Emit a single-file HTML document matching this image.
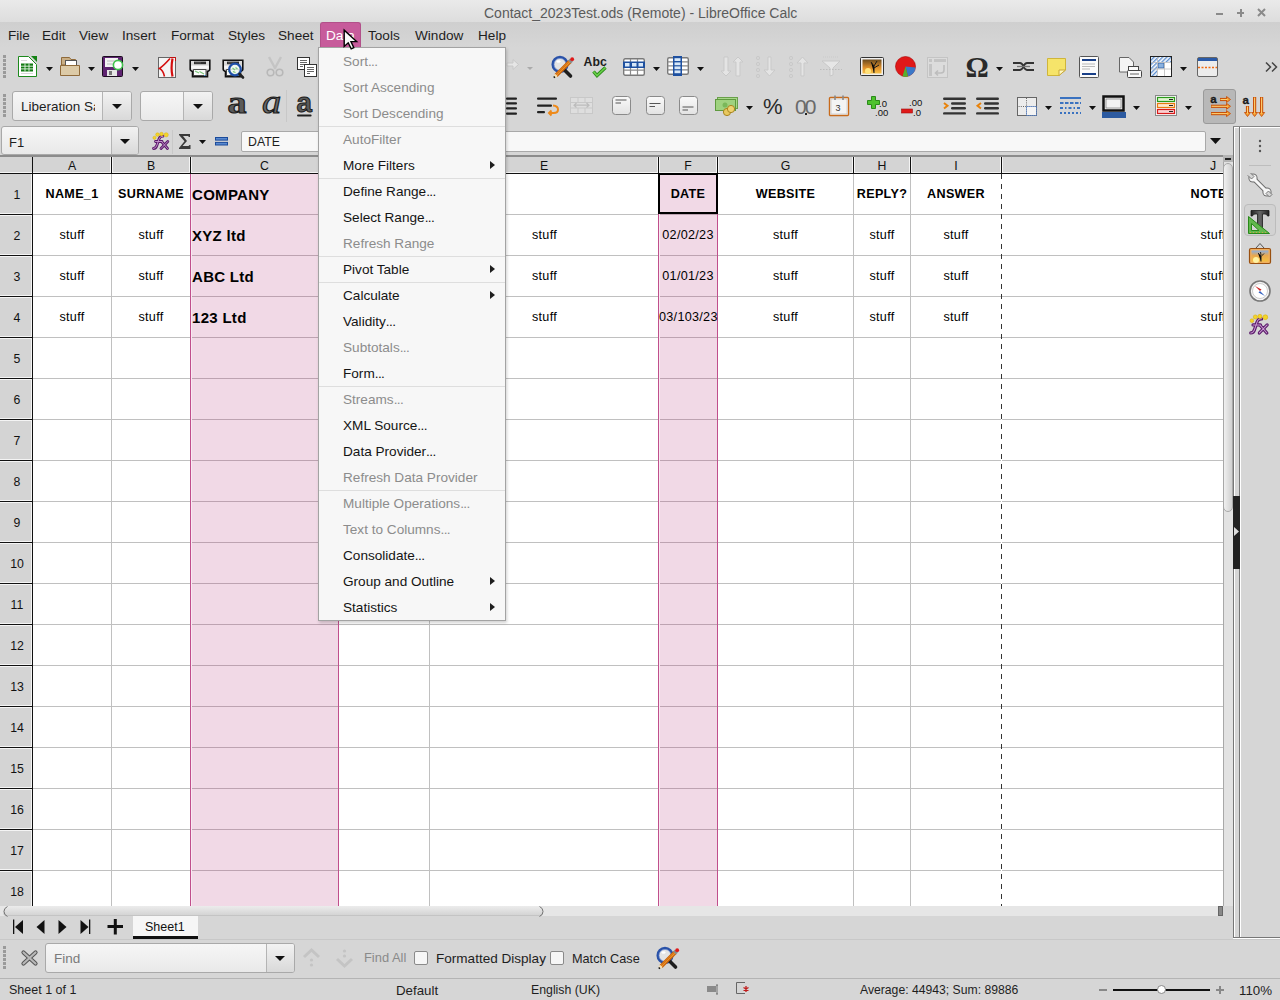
<!DOCTYPE html><html><head><meta charset="utf-8"><style>
*{margin:0;padding:0;box-sizing:border-box}
html,body{width:1280px;height:1000px;overflow:hidden;background:#d6d6d6;font-family:"Liberation Sans",sans-serif;position:relative}
.ab{position:absolute;overflow:visible}
.t{position:absolute;white-space:nowrap;line-height:1}
.it{position:absolute;left:343px;font-size:13.6px;color:#141414;white-space:nowrap;line-height:1}
.dis{color:#8c8c8c}
.sep{position:absolute;left:319px;width:186px;height:1px;background:#dedede}
.arr{position:absolute;left:490px;width:0;height:0;border-top:4.75px solid transparent;border-bottom:4.75px solid transparent;border-left:5.5px solid #1e1e1e}
.cell{position:absolute;white-space:nowrap;line-height:1;font-size:12.6px;letter-spacing:0.3px;color:#000}
.box{position:absolute;border:1px solid #a9a9a9;border-radius:3px;background:linear-gradient(#f6f6f6,#e9e9e9)}
.btn{position:absolute;border-left:1px solid #b4b4b4;background:linear-gradient(#f2f2f2,#d9d9d9)}
</style></head><body>
<div class="ab" style="left:0;top:0;width:1280px;height:22px;background:linear-gradient(#eaeaea,#dddddd)"></div>
<div class="t" style="left:484px;top:6px;font-size:14px;color:#5b5b5b">Contact_2023Test.ods (Remote) - LibreOffice Calc</div>
<div class="ab" style="left:1216px;top:13px;width:7px;height:2px;background:#8a8a8a"></div>
<div class="ab" style="left:1237px;top:12px;width:7px;height:2px;background:#8a8a8a"></div><div class="ab" style="left:1239.5px;top:9px;width:2px;height:8px;background:#8a8a8a"></div>
<svg class="ab" style="left:1257px;top:8px" width="9" height="9"><path d="M1 1L8 8M8 1L1 8" stroke="#8a8a8a" stroke-width="2"/></svg>
<div class="ab" style="left:0;top:22px;width:1280px;height:26px;background:linear-gradient(#cfcfcf,#d6d6d6)"></div>
<div class="ab" style="left:320px;top:22px;width:41px;height:26px;background:#c75b9b;border:1px solid #b2508a;border-bottom:none;border-radius:3px 3px 0 0"></div>
<div class="t" style="left:8px;top:29px;font-size:13.6px;color:#1e1e1e">File</div>
<div class="t" style="left:42px;top:29px;font-size:13.6px;color:#1e1e1e">Edit</div>
<div class="t" style="left:79px;top:29px;font-size:13.6px;color:#1e1e1e">View</div>
<div class="t" style="left:122px;top:29px;font-size:13.6px;color:#1e1e1e">Insert</div>
<div class="t" style="left:171px;top:29px;font-size:13.6px;color:#1e1e1e">Format</div>
<div class="t" style="left:228px;top:29px;font-size:13.6px;color:#1e1e1e">Styles</div>
<div class="t" style="left:278px;top:29px;font-size:13.6px;color:#1e1e1e">Sheet</div>
<div class="t" style="left:326px;top:29px;font-size:13.6px;color:#fff">Data</div>
<div class="t" style="left:368px;top:29px;font-size:13.6px;color:#1e1e1e">Tools</div>
<div class="t" style="left:415px;top:29px;font-size:13.6px;color:#1e1e1e">Window</div>
<div class="t" style="left:478px;top:29px;font-size:13.6px;color:#1e1e1e">Help</div>
<svg class="ab" style="left:3px;top:55px" width="3" height="24" viewBox="0 0 3 24"><rect x="0" y="0" width="3" height="3" fill="#9a9a9a"/><rect x="0" y="4" width="3" height="3" fill="#9a9a9a"/><rect x="0" y="8" width="3" height="3" fill="#9a9a9a"/><rect x="0" y="12" width="3" height="3" fill="#9a9a9a"/><rect x="0" y="16" width="3" height="3" fill="#9a9a9a"/><rect x="0" y="20" width="3" height="3" fill="#9a9a9a"/></svg>
<svg class="ab" style="left:18px;top:56px" width="19" height="21" viewBox="0 0 19 21"><path d="M0.5 0.5H10.5L18.5 8.5V20.5H0.5Z" fill="#fff" stroke="#1d8a1d"/><path d="M13 0H19V6Z" fill="#138313"/><rect x="3" y="7.5" width="12" height="8" fill="#127a12"/><path d="M3 10.2H15M3 12.9H15M7 7.5V15.5M11 7.5V15.5" stroke="#e8f5e8" stroke-width="0.9"/><path d="M3 4.5H9M3 17.5H15" stroke="#d8d8d8" stroke-width="1"/></svg>
<svg class="ab" style="left:46px;top:67px" width="7" height="4" viewBox="0 0 7 4"><path d="M0 0H7L3.5 4Z" fill="#111"/></svg>
<svg class="ab" style="left:60px;top:57px" width="20" height="19" viewBox="0 0 20 19"><path d="M1.5 0.5H9.5L11 2.5H15.5V8H1.5Z" fill="#c9ae84" stroke="#8f6a3a"/><rect x="5.5" y="3.5" width="11" height="7" fill="#fff" stroke="#555"/><path d="M0.5 8.5H19.5V18.5H0.5Z" fill="#dccaa7" stroke="#8f6a3a"/></svg>
<svg class="ab" style="left:88px;top:67px" width="7" height="4" viewBox="0 0 7 4"><path d="M0 0H7L3.5 4Z" fill="#111"/></svg>
<svg class="ab" style="left:102px;top:56px" width="21" height="21" viewBox="0 0 21 21"><rect x="0.5" y="0.5" width="20" height="20" rx="1" fill="#5e2370" stroke="#1a0d1e"/><rect x="3" y="2" width="13" height="9" fill="#f3f3f3"/><path d="M5 5H14M5 8H14" stroke="#bbb"/><rect x="5" y="14" width="10" height="6" fill="#e6e6e6"/><rect x="7" y="15" width="3" height="4" fill="#777"/><circle cx="16" cy="9" r="4.6" fill="#fff" stroke="#3ec24a" stroke-width="1.6"/></svg>
<svg class="ab" style="left:132px;top:67px" width="7" height="4" viewBox="0 0 7 4"><path d="M0 0H7L3.5 4Z" fill="#111"/></svg>
<svg class="ab" style="left:158px;top:57px" width="18" height="21" viewBox="0 0 18 21"><rect x="0.5" y="0.5" width="17" height="20" fill="#f4f4f4" stroke="#666"/><path d="M12 1.5C8 6 5 9 1.5 11.5C4 12.5 5.5 15 6.5 19.5" fill="none" stroke="#d40f0f" stroke-width="1.6"/><path d="M14.5 1.5C13.5 7 13 13 14.5 19.5" fill="none" stroke="#d40f0f" stroke-width="2.2"/><path d="M12 0.5H17.5V4" fill="none" stroke="#c01010" stroke-width="1"/></svg>
<svg class="ab" style="left:189px;top:59px" width="22" height="20" viewBox="0 0 22 20"><defs><linearGradient id="pg" x1="0" y1="0" x2="0" y2="1"><stop offset="0" stop-color="#e0e0e0"/><stop offset="1" stop-color="#bdbdbd"/></linearGradient></defs><path d="M1.2 1.2H20.8V10.5Q20.8 11.5 19.5 12L18.5 12.5V17.8H3.5V12.5L2.5 12Q1.2 11.5 1.2 10.5Z" fill="url(#pg)" stroke="#111" stroke-width="1.6"/><rect x="5" y="2.6" width="12" height="2.6" fill="#2e2e2e"/><path d="M6.5 3.9H12" stroke="#888" stroke-width="0.9" stroke-dasharray="1 1"/><rect x="2.2" y="6.6" width="17.6" height="3.2" fill="#f8f8f8"/><rect x="4.6" y="10.6" width="12.4" height="6" fill="#fbfbfb" stroke="#222" stroke-width="0.8"/><path d="M6 12L10 14M10.5 12.5L15 15" stroke="#7cc87c" stroke-width="1.2"/><rect x="15" y="16" width="1.5" height="1" fill="#4aa0e0"/></svg>
<svg class="ab" style="left:222px;top:59px" width="22" height="20" viewBox="0 0 22 20"><defs><linearGradient id="pg" x1="0" y1="0" x2="0" y2="1"><stop offset="0" stop-color="#e0e0e0"/><stop offset="1" stop-color="#bdbdbd"/></linearGradient></defs><path d="M1.2 1.2H20.8V10.5Q20.8 11.5 19.5 12L18.5 12.5V17.8H3.5V12.5L2.5 12Q1.2 11.5 1.2 10.5Z" fill="url(#pg)" stroke="#111" stroke-width="1.6"/><rect x="5" y="2.6" width="12" height="2.6" fill="#2e2e2e"/><path d="M6.5 3.9H12" stroke="#888" stroke-width="0.9" stroke-dasharray="1 1"/><rect x="2.2" y="6.6" width="17.6" height="3.2" fill="#f8f8f8"/><rect x="4.6" y="10.6" width="12.4" height="6" fill="#fbfbfb" stroke="#222" stroke-width="0.8"/><path d="M6 12L10 14M10.5 12.5L15 15" stroke="#7cc87c" stroke-width="1.2"/><rect x="15" y="16" width="1.5" height="1" fill="#4aa0e0"/><circle cx="13" cy="10.5" r="5.8" fill="rgba(240,248,240,0.85)" stroke="#1e4fa8" stroke-width="2.2"/><path d="M10.5 9L13 11M13.5 8.5L15.5 10M11 12.5L13.5 13.5" stroke="#7cc87c" stroke-width="1.3"/><path d="M17.5 15L21 18.5" stroke="#222" stroke-width="2.6" stroke-linecap="round"/></svg>
<svg class="ab" style="left:266px;top:56px" width="18" height="21" viewBox="0 0 18 21"><path d="M3 1L9.5 13M15 1L8.5 13" stroke="#c4c4c4" stroke-width="2.4"/><circle cx="4.5" cy="16.5" r="3.3" fill="none" stroke="#b8b8b8" stroke-width="1.6"/><circle cx="13.5" cy="16.5" r="3.3" fill="none" stroke="#b8b8b8" stroke-width="1.6"/></svg>
<svg class="ab" style="left:297px;top:57px" width="20" height="20" viewBox="0 0 20 20"><rect x="0.5" y="0.5" width="12" height="12" fill="#fff" stroke="#333"/><path d="M3 3.5H10M3 5.5H10M3 7.5H10M3 9.5H6" stroke="#555" stroke-width="0.9"/><rect x="7.5" y="7.5" width="12" height="12" fill="#fff" stroke="#333"/><path d="M10 10.5H17M10 12.5H17M10 14.5H17M10 16.5H13" stroke="#555" stroke-width="0.9"/></svg>
<svg class="ab" style="left:506px;top:58px" width="14" height="13" viewBox="0 0 14 13"><path d="M1 5H7V1.5L12.5 6.5L7 11.5V8H1Z" fill="#e6e6e6" stroke="#c8c8c8"/></svg>
<svg class="ab" style="left:527px;top:67px" width="6" height="3" viewBox="0 0 6 3"><path d="M0 0H6L3.0 3Z" fill="#aaa"/></svg>
<svg class="ab" style="left:551px;top:55px" width="24" height="24" viewBox="0 0 24 24"><circle cx="9" cy="9.4" r="7.3" fill="#e4e4e4" stroke="#2a52a8" stroke-width="2.5"/><circle cx="9" cy="9.4" r="6" fill="none" stroke="#6a8ad0" stroke-width="0.7"/><ellipse cx="7.5" cy="6.5" rx="2" ry="1.3" fill="#fff"/><path d="M14 15.5L19.5 21" stroke="#1e1e1e" stroke-width="3.6" stroke-linecap="round"/><path d="M5 20.5L19 6.5" stroke="#c8600a" stroke-width="4"/><path d="M5 20.5L19 6.5" stroke="#f4a030" stroke-width="2.2" stroke-dasharray="0.8 0.6"/><path d="M18.5 7L20.5 5" stroke="#8a8a8a" stroke-width="4"/><circle cx="21.2" cy="4.2" r="1.9" fill="#e01818"/><path d="M5.5 20L3.5 22" stroke="#f8e0b0" stroke-width="3"/><path d="M3.8 21.7L2.8 22.7" stroke="#111" stroke-width="1.8"/></svg>
<svg class="ab" style="left:584px;top:56px" width="23" height="22" viewBox="0 0 23 22"><text x="-0.5" y="10" font-family="Liberation Sans" font-weight="bold" font-size="12.3" fill="#1e1e1e">Abc</text><path d="M9.5 15.5L13 19.5L21.5 11.5" fill="none" stroke="#2a8a1a" stroke-width="3.4"/><path d="M9.5 15.5L13 19.5L21.5 11.5" fill="none" stroke="#6ad04a" stroke-width="1.6"/></svg>
<svg class="ab" style="left:623px;top:58px" width="22" height="18" viewBox="0 0 22 18"><rect x="0.7" y="0.7" width="20.6" height="16.6" rx="1.5" fill="#fff" stroke="#7a7a7a" stroke-width="1.4"/><path d="M1 12.2H21M7.5 1V17M14.5 1V17" stroke="#8a8a8a" stroke-width="1.2"/><rect x="0" y="3.5" width="22" height="6.5" fill="#1e50a0"/><rect x="2" y="5" width="4.5" height="3.5" fill="#d8e8f8"/><rect x="9" y="5" width="4.5" height="3.5" fill="#d8e8f8"/><rect x="15.5" y="5" width="4.5" height="3.5" fill="#d8e8f8"/></svg>
<svg class="ab" style="left:653px;top:67px" width="7" height="4" viewBox="0 0 7 4"><path d="M0 0H7L3.5 4Z" fill="#111"/></svg>
<svg class="ab" style="left:667px;top:56px" width="22" height="20" viewBox="0 0 22 20"><rect x="0.7" y="1.7" width="20.6" height="16.6" rx="1.5" fill="#fff" stroke="#7a7a7a" stroke-width="1.4"/><path d="M1 5.8H21M1 9.8H21M1 13.8H21" stroke="#8a8a8a" stroke-width="1.2"/><rect x="6" y="0" width="9" height="20" fill="#1e50a0"/><rect x="7.5" y="2.2" width="6" height="2.8" fill="#d8e8f8"/><rect x="7.5" y="6.4" width="6" height="2.8" fill="#d8e8f8"/><rect x="7.5" y="10.4" width="6" height="2.8" fill="#d8e8f8"/><rect x="7.5" y="14.4" width="6" height="2.8" fill="#d8e8f8"/></svg>
<svg class="ab" style="left:697px;top:67px" width="7" height="4" viewBox="0 0 7 4"><path d="M0 0H7L3.5 4Z" fill="#111"/></svg>
<svg class="ab" style="left:720px;top:56px" width="24" height="21" viewBox="0 0 24 21"><path d="M4 1V15H1L6 20L11 15H8V1Z" fill="#e4e4e4" stroke="#c9c9c9"/><path d="M16 20V6H13L18 1L23 6H20V20Z" fill="#e4e4e4" stroke="#c9c9c9"/></svg>
<svg class="ab" style="left:755px;top:56px" width="21" height="21" viewBox="0 0 21 21"><circle cx="3" cy="2" r="1.6" fill="none" stroke="#c9c9c9"/><circle cx="3" cy="8" r="1.6" fill="none" stroke="#c9c9c9"/><circle cx="3" cy="14" r="1.6" fill="none" stroke="#c9c9c9"/><circle cx="3" cy="20" r="1.6" fill="none" stroke="#c9c9c9"/><path d="M13 1V14H9L14.5 20L20 14H16V1Z" fill="#e4e4e4" stroke="#c9c9c9"/></svg>
<svg class="ab" style="left:788px;top:56px" width="21" height="21" viewBox="0 0 21 21"><circle cx="3" cy="2" r="1.6" fill="none" stroke="#c9c9c9"/><circle cx="3" cy="8" r="1.6" fill="none" stroke="#c9c9c9"/><circle cx="3" cy="14" r="1.6" fill="none" stroke="#c9c9c9"/><circle cx="3" cy="20" r="1.6" fill="none" stroke="#c9c9c9"/><path d="M13 20V7H9L14.5 1L20 7H16V20Z" fill="#e4e4e4" stroke="#c9c9c9"/></svg>
<svg class="ab" style="left:820px;top:56px" width="22" height="21" viewBox="0 0 22 21"><path d="M2 5H20L13 12V19L10 20V12Z" fill="#e6e6e6" stroke="#c8c8c8"/><path d="M0 13.5H22" stroke="#bdbdbd" stroke-dasharray="1.5 1.5"/><path d="M3 1H19" stroke="#d0d0d0" stroke-width="2" stroke-dasharray="1 1"/></svg>
<svg class="ab" style="left:860px;top:57px" width="24" height="19" viewBox="0 0 24 19"><rect x="0.5" y="0.5" width="23" height="18" rx="1" fill="#f0f0f0" stroke="#333"/><defs><linearGradient id="sun" x1="0" y1="0" x2="0" y2="1"><stop offset="0" stop-color="#6a4a1e"/><stop offset="0.6" stop-color="#e0902a"/><stop offset="1" stop-color="#f7c24a"/></linearGradient></defs><rect x="2.5" y="2.5" width="19" height="14" fill="url(#sun)"/><circle cx="8" cy="14" r="3" fill="#ffe27a"/><path d="M14 16V9L11 5M14 9L17 4M14 11L19 8" stroke="#1a1a1a" stroke-width="1"/></svg>
<svg class="ab" style="left:895px;top:56px" width="21" height="21" viewBox="0 0 21 21"><circle cx="10.5" cy="10.5" r="10" fill="#e01818" stroke="#a00" stroke-width="0.6"/><path d="M10.5 10.5L20.5 11.5A10 10 0 0 1 13 20.3Z" fill="#3a78c8"/><path d="M10.5 10.5L13 20.5A10 10 0 0 1 7.5 20.2Z" fill="#55b030"/></svg>
<svg class="ab" style="left:927px;top:57px" width="21" height="21" viewBox="0 0 21 21"><rect x="0.5" y="0.5" width="20" height="20" fill="#dcdcdc" stroke="#c4c4c4"/><rect x="2" y="2" width="3" height="3" fill="#c4c4c4"/><rect x="7" y="2" width="12" height="3" fill="#c4c4c4"/><rect x="2" y="7" width="3" height="12" fill="#c4c4c4"/><path d="M17 8V13Q17 16 14 16H9M11 13.5L8.5 16L11 18.5" fill="none" stroke="#bdbdbd" stroke-width="1.6"/></svg>
<svg class="ab" style="left:966px;top:57px" width="23" height="23" viewBox="0 0 23 23"><text x="11" y="20" text-anchor="middle" font-family="Liberation Serif" font-weight="bold" font-size="29" fill="#2a2a2a">Ω</text></svg>
<svg class="ab" style="left:996px;top:67px" width="7" height="4" viewBox="0 0 7 4"><path d="M0 0H7L3.5 4Z" fill="#111"/></svg>
<svg class="ab" style="left:1012px;top:61px" width="23" height="11" viewBox="0 0 23 11"><path d="M1 2H8Q10 2 11.5 5.5Q13 9 15 9H22M1 9H8Q10 9 11.5 5.5Q13 2 15 2H22" fill="none" stroke="#333" stroke-width="1.8"/><path d="M5 5.5H18" stroke="#777" stroke-width="1.3"/></svg>
<svg class="ab" style="left:1047px;top:58px" width="19" height="18" viewBox="0 0 19 18"><path d="M0.5 0.5H18.5V12L12 17.5H0.5Z" fill="#f6e46a" stroke="#cfb53a"/><path d="M12 17.5V12H18.5Z" fill="#fff7c0" stroke="#c9a93a"/></svg>
<svg class="ab" style="left:1079px;top:56px" width="20" height="22" viewBox="0 0 20 22"><rect x="0.5" y="0.5" width="19" height="21" rx="1" fill="#fbfbfb" stroke="#555"/><rect x="3" y="3" width="14" height="2" fill="#183f88"/><path d="M3 8H16M3 10.5H16M3 13H11" stroke="#aaa" stroke-width="0.8"/><rect x="3" y="17" width="14" height="2" fill="#183f88"/></svg>
<svg class="ab" style="left:1119px;top:56px" width="23" height="22" viewBox="0 0 23 22"><path d="M0.5 1.5H10L14.5 6V16H0.5Z" fill="#f4f4f4" stroke="#666"/><rect x="9.5" y="10.5" width="10" height="4" fill="#fafafa" stroke="#444"/><rect x="8.5" y="14.5" width="14" height="7" rx="1" fill="#fafafa" stroke="#444"/><path d="M11 18H20" stroke="#666"/></svg>
<svg class="ab" style="left:1150px;top:56px" width="22" height="21" viewBox="0 0 22 21"><defs><pattern id="hat" width="3" height="3" patternUnits="userSpaceOnUse" patternTransform="rotate(45)"><rect width="3" height="3" fill="#fff"/><rect width="1.4" height="3" fill="#5d8fd0"/></pattern></defs><rect x="0.5" y="0.5" width="21" height="20" fill="#fff" stroke="#222"/><rect x="1" y="1" width="20" height="5" fill="url(#hat)"/><rect x="1" y="6" width="6" height="14" fill="url(#hat)"/><rect x="8" y="7" width="6" height="5" fill="#8bb2e0" stroke="#2a5aa0" stroke-width="0.8"/><path d="M7.5 1V20M14.5 6V20M1 6.5H21M1 13H21" stroke="#bbb" stroke-width="0.8"/></svg>
<svg class="ab" style="left:1180px;top:67px" width="7" height="4" viewBox="0 0 7 4"><path d="M0 0H7L3.5 4Z" fill="#111"/></svg>
<svg class="ab" style="left:1197px;top:57px" width="21" height="20" viewBox="0 0 21 20"><rect x="0.5" y="0.5" width="20" height="19" rx="1.5" fill="#ececec" stroke="#666"/><rect x="1" y="1" width="19" height="3" fill="#2a5aa8"/><path d="M1 10.5H20" stroke="#f06a10" stroke-width="1.4" stroke-dasharray="2 1.5"/></svg>
<svg class="ab" style="left:1265px;top:62px" width="13" height="10" viewBox="0 0 13 10"><path d="M1 0.5L5.5 5L1 9.5M7 0.5L11.5 5L7 9.5" fill="none" stroke="#444" stroke-width="1.5"/></svg>
<svg class="ab" style="left:3px;top:94px" width="3" height="24" viewBox="0 0 3 24"><rect x="0" y="0" width="3" height="3" fill="#9a9a9a"/><rect x="0" y="4" width="3" height="3" fill="#9a9a9a"/><rect x="0" y="8" width="3" height="3" fill="#9a9a9a"/><rect x="0" y="12" width="3" height="3" fill="#9a9a9a"/><rect x="0" y="16" width="3" height="3" fill="#9a9a9a"/><rect x="0" y="20" width="3" height="3" fill="#9a9a9a"/></svg>
<div class="box" style="left:12px;top:91px;width:120px;height:30px;overflow:hidden"><div class="btn" style="left:89px;top:0;width:30px;height:28px"></div></div>
<div class="t" style="left:21px;top:100px;font-size:13.5px;color:#1e1e1e;width:74px;overflow:hidden">Liberation Sans</div>
<svg class="ab" style="left:112px;top:104px" width="10" height="5" viewBox="0 0 10 5"><path d="M0 0H10L5.0 5Z" fill="#111"/></svg>
<div class="box" style="left:140px;top:91px;width:73px;height:30px;overflow:hidden"><div class="btn" style="left:42px;top:0;width:30px;height:28px"></div></div>
<svg class="ab" style="left:193px;top:104px" width="10" height="5" viewBox="0 0 10 5"><path d="M0 0H10L5.0 5Z" fill="#111"/></svg>
<svg class="ab" style="left:228px;top:97px" width="22" height="20" viewBox="0 0 22 20"><g transform="translate(-0.4,-21.6) scale(1.12,0.96)"><text x="0" y="39" font-family="Liberation Serif" font-weight="bold" font-size="34" fill="#5a5a5a" stroke="#1a1a1a" stroke-width="1.1">a</text></g></svg>
<svg class="ab" style="left:262px;top:97px" width="22" height="20" viewBox="0 0 22 20"><g transform="translate(0,-21.6) scale(1.13,0.96)"><text x="0" y="39" font-family="Liberation Serif" font-style="italic" font-size="34" fill="#6a6a6a" stroke="#1a1a1a" stroke-width="1.1">a</text></g></svg>
<div class="ab" style="left:286px;top:90px;width:1px;height:32px;background:#c8c8c8"></div>
<svg class="ab" style="left:297px;top:97px" width="18" height="21" viewBox="0 0 18 21"><g transform="translate(-0.5,-20.2) scale(0.92,0.9)"><text x="0" y="39" font-family="Liberation Sans" font-weight="bold" font-size="30" fill="#5a5a5a" stroke="#1a1a1a" stroke-width="1.1">a</text></g><rect x="0" y="17.4" width="14.6" height="2.2" rx="1" fill="#222"/></svg>
<svg class="ab" style="left:506px;top:97px" width="11" height="19.5" viewBox="0 0 11 19.5"><rect x="0" y="0.5" width="11" height="2.2" rx="1" fill="#222"/><rect x="0" y="5.3" width="11" height="2.2" rx="1" fill="#222"/><rect x="0" y="10.3" width="11" height="2.2" rx="1" fill="#222"/><rect x="0" y="15.5" width="11" height="2.2" rx="1" fill="#222"/></svg>
<svg class="ab" style="left:537px;top:97px" width="23" height="20" viewBox="0 0 23 20"><rect x="0" y="0.5" width="20" height="2.2" rx="1" fill="#222"/><rect x="0" y="7.5" width="15" height="2.2" rx="1" fill="#222"/><rect x="0" y="14" width="8" height="2.2" rx="1" fill="#222"/><path d="M16 8.5Q21 9 21 12.5Q21 16 16.5 16H12.5M14.5 13.5L12 16L14.5 18.5" fill="none" stroke="#ee8a1a" stroke-width="2"/></svg>
<svg class="ab" style="left:570px;top:97px" width="23" height="17" viewBox="0 0 23 17"><rect x="0.5" y="0.5" width="22" height="16" fill="#dedede" stroke="#c8c8c8"/><path d="M0 5.5H23M0 11H23M8 0V5M15 0V5M8 11V17M15 11V17" stroke="#c8c8c8"/><path d="M4 8.2H19M6.5 6L4 8.2L6.5 10.5M16.5 6L19 8.2L16.5 10.5" fill="none" stroke="#bcbcbc" stroke-width="1.2"/></svg>
<svg class="ab" style="left:612px;top:96px" width="19" height="19" viewBox="0 0 19 19"><defs><linearGradient id="ag" x1="0" y1="0" x2="0" y2="1"><stop offset="0" stop-color="#fafafa"/><stop offset="1" stop-color="#e2e2e2"/></linearGradient></defs><rect x="0.5" y="0.5" width="18" height="18" rx="3" fill="url(#ag)" stroke="#8a8a8a"/><path d="M3.5 4H14.5M3.5 7H9" stroke="#555" stroke-width="1.1"/></svg>
<svg class="ab" style="left:646px;top:96px" width="19" height="19" viewBox="0 0 19 19"><defs><linearGradient id="ag" x1="0" y1="0" x2="0" y2="1"><stop offset="0" stop-color="#fafafa"/><stop offset="1" stop-color="#e2e2e2"/></linearGradient></defs><rect x="0.5" y="0.5" width="18" height="18" rx="3" fill="url(#ag)" stroke="#8a8a8a"/><path d="M3.5 7.5H14.5M3.5 10.5H9" stroke="#555" stroke-width="1.1"/></svg>
<svg class="ab" style="left:679px;top:96px" width="19" height="19" viewBox="0 0 19 19"><defs><linearGradient id="ag" x1="0" y1="0" x2="0" y2="1"><stop offset="0" stop-color="#fafafa"/><stop offset="1" stop-color="#e2e2e2"/></linearGradient></defs><rect x="0.5" y="0.5" width="18" height="18" rx="3" fill="url(#ag)" stroke="#8a8a8a"/><path d="M3.5 11H14.5M3.5 14H9" stroke="#555" stroke-width="1.1"/></svg>
<svg class="ab" style="left:715px;top:97px" width="24" height="19" viewBox="0 0 24 19"><rect x="2.5" y="0.5" width="20" height="11" fill="#a8d88a" stroke="#6aa04a"/><rect x="0.5" y="2.5" width="20" height="11" fill="#9fd27f" stroke="#5f9a3f"/><circle cx="10" cy="8" r="2.5" fill="#7ab85a"/><circle cx="12" cy="15" r="3.6" fill="#e8c860" stroke="#a88420"/><circle cx="16" cy="12" r="3.6" fill="#f0d270" stroke="#a88420"/></svg>
<svg class="ab" style="left:746px;top:106px" width="7" height="4" viewBox="0 0 7 4"><path d="M0 0H7L3.5 4Z" fill="#111"/></svg>
<svg class="ab" style="left:763px;top:97px" width="22" height="19" viewBox="0 0 22 19"><text x="0" y="17" font-family="Liberation Sans" font-size="22" fill="#2a2a2a">%</text></svg>
<svg class="ab" style="left:795px;top:97px" width="24" height="19" viewBox="0 0 24 19"><text x="0" y="17" font-family="Liberation Sans" font-size="21" fill="#6a6a6a" letter-spacing="-2">00</text><rect x="10" y="16" width="2" height="2" fill="#222"/></svg>
<svg class="ab" style="left:829px;top:95px" width="20" height="21" viewBox="0 0 20 21"><rect x="0.5" y="2.5" width="19" height="18" rx="1" fill="#fafafa" stroke="#c86a1a" stroke-width="1.4"/><rect x="2" y="4" width="16" height="15" fill="#f4f4f4" stroke="#bbb" stroke-width="0.6"/><path d="M6 0.5V5M14 0.5V5" stroke="#888" stroke-width="1.6"/><text x="6.5" y="15.5" font-family="Liberation Sans" font-size="9" fill="#333">3</text></svg>
<svg class="ab" style="left:867px;top:96px" width="24" height="21" viewBox="0 0 24 21"><path d="M4.5 0.5H8.5V4.5H12.5V8.5H8.5V12.5H4.5V8.5H0.5V4.5H4.5Z" fill="#4ec22e" stroke="#2a8a1a"/><text x="12" y="11" font-family="Liberation Sans" font-size="9.5" fill="#111">.0</text><text x="8" y="20" font-family="Liberation Sans" font-size="9.5" fill="#111">.00</text></svg>
<svg class="ab" style="left:901px;top:96px" width="24" height="21" viewBox="0 0 24 21"><text x="8" y="10" font-family="Liberation Sans" font-size="9.5" fill="#111">.00</text><rect x="0.5" y="13" width="11" height="4" fill="#e01a1a" stroke="#a01010" stroke-width="0.6"/><text x="12" y="19.5" font-family="Liberation Sans" font-size="9.5" fill="#111">.0</text></svg>
<svg class="ab" style="left:943px;top:97px" width="23" height="19" viewBox="0 0 23 19"><rect x="0" y="0.5" width="23" height="2.4" rx="1.2" fill="#333"/><rect x="8" y="5.3" width="15" height="2.4" rx="1.2" fill="#333"/><rect x="8" y="10.1" width="15" height="2.4" rx="1.2" fill="#333"/><rect x="0" y="15.2" width="23" height="2.4" rx="1.2" fill="#333"/><path d="M1 6L4.5 8.7L1 11.5" fill="none" stroke="#e8820a" stroke-width="2"/></svg>
<svg class="ab" style="left:976px;top:97px" width="23" height="19" viewBox="0 0 23 19"><rect x="0" y="0.5" width="23" height="2.4" rx="1.2" fill="#333"/><rect x="8" y="5.3" width="15" height="2.4" rx="1.2" fill="#333"/><rect x="8" y="10.1" width="15" height="2.4" rx="1.2" fill="#333"/><rect x="0" y="15.2" width="23" height="2.4" rx="1.2" fill="#333"/><path d="M5 6L1.5 8.7L5 11.5" fill="none" stroke="#e8820a" stroke-width="2"/></svg>
<svg class="ab" style="left:1017px;top:97px" width="20" height="19" viewBox="0 0 20 19"><rect x="0.5" y="0.5" width="19" height="18" fill="#ececec" stroke="#666"/><path d="M9.5 1V9.5H1" fill="none" stroke="#444" stroke-width="0.8" stroke-dasharray="1 1.2"/><rect x="9.5" y="9.5" width="10" height="9" fill="#f4f4f4" stroke="#2a5aa8" stroke-dasharray="1.2 0.8"/></svg>
<svg class="ab" style="left:1045px;top:106px" width="7" height="4" viewBox="0 0 7 4"><path d="M0 0H7L3.5 4Z" fill="#111"/></svg>
<svg class="ab" style="left:1060px;top:97px" width="21" height="17" viewBox="0 0 21 17"><rect x="0" y="0" width="21" height="2" fill="#3a72c0"/><path d="M0 6H21" stroke="#3a72c0" stroke-width="2" stroke-dasharray="3.5 1.5"/><path d="M0 11H21" stroke="#3a72c0" stroke-width="2" stroke-dasharray="3 2 1.5 2"/><path d="M0 16H21" stroke="#3a72c0" stroke-width="2" stroke-dasharray="2 2"/></svg>
<svg class="ab" style="left:1089px;top:106px" width="7" height="4" viewBox="0 0 7 4"><path d="M0 0H7L3.5 4Z" fill="#111"/></svg>
<svg class="ab" style="left:1102px;top:95px" width="24" height="24" viewBox="0 0 24 24"><rect x="1.5" y="1.5" width="20" height="14" fill="#ededed" stroke="#111" stroke-width="2.5"/><rect x="4" y="4" width="15" height="9" fill="#f2f2f2" stroke="#666" stroke-width="0.6"/><rect x="0" y="17" width="24" height="6" fill="#2c5aa0"/></svg>
<svg class="ab" style="left:1133px;top:106px" width="7" height="4" viewBox="0 0 7 4"><path d="M0 0H7L3.5 4Z" fill="#111"/></svg>
<svg class="ab" style="left:1155px;top:95px" width="22" height="21" viewBox="0 0 22 21"><rect x="0.5" y="0.5" width="21" height="20" fill="#fafafa" stroke="#888"/><rect x="2.5" y="2.5" width="17" height="4" fill="#dff5d0" stroke="#2a9a1a" stroke-width="1.2"/><rect x="2.5" y="8.5" width="17" height="4" fill="#fde8cc" stroke="#e87a10" stroke-width="1.2"/><rect x="2.5" y="14.5" width="17" height="4" fill="#fad0d0" stroke="#d81a1a" stroke-width="1.2"/><path d="M14 4.5H18M14 10.5H18M14 16.5H18" stroke="#222" stroke-width="1.2"/></svg>
<svg class="ab" style="left:1185px;top:106px" width="7" height="4" viewBox="0 0 7 4"><path d="M0 0H7L3.5 4Z" fill="#111"/></svg>
<div class="ab" style="left:1203px;top:89px;width:33px;height:35px;background:#b8b8b8;border:1px solid #9a9a9a;border-radius:3px"></div>
<svg class="ab" style="left:1210px;top:94px" width="22" height="23" viewBox="0 0 22 23"><text x="0.3" y="9" font-family="Liberation Sans" font-weight="bold" font-size="11.5" fill="#222" stroke="#111" stroke-width="0.3">a</text><path d="M10 5.5H17.5" stroke="#c8500a" stroke-width="3.2"/><path d="M16.5 2.5L20.5 5.5L16.5 8.5Z" fill="#f4a030" stroke="#c8500a" stroke-width="0.9"/><path d="M10.5 5.5H17.5" stroke="#ffd070" stroke-width="1.1"/><path d="M1 12.3H17.5" stroke="#c8500a" stroke-width="3.2"/><path d="M16.5 9.3L20.5 12.3L16.5 15.3Z" fill="#f4a030" stroke="#c8500a" stroke-width="0.9"/><path d="M1.5 12.3H17.5" stroke="#ffd070" stroke-width="1.1"/><path d="M1 19.6H17.5" stroke="#c8500a" stroke-width="3.2"/><path d="M16.5 16.6L20.5 19.6L16.5 22.6Z" fill="#f4a030" stroke="#c8500a" stroke-width="0.9"/><path d="M1.5 19.6H17.5" stroke="#ffd070" stroke-width="1.1"/></svg>
<svg class="ab" style="left:1242px;top:95px" width="23" height="23" viewBox="0 0 23 23"><text x="0.5" y="9" font-family="Liberation Sans" font-weight="bold" font-size="11.5" fill="#222" stroke="#111" stroke-width="0.3">a</text><path d="M5.5 11V18.5" stroke="#c8500a" stroke-width="3.2"/><path d="M2.5 17.5L5.5 21.5L8.5 17.5Z" fill="#f4a030" stroke="#c8500a" stroke-width="0.9"/><path d="M5.5 11.5V18.5" stroke="#ffd070" stroke-width="1.1"/><path d="M12.6 2V18.5" stroke="#c8500a" stroke-width="3.2"/><path d="M9.6 17.5L12.6 21.5L15.6 17.5Z" fill="#f4a030" stroke="#c8500a" stroke-width="0.9"/><path d="M12.6 2.5V18.5" stroke="#ffd070" stroke-width="1.1"/><path d="M19.6 2V18.5" stroke="#c8500a" stroke-width="3.2"/><path d="M16.6 17.5L19.6 21.5L22.6 17.5Z" fill="#f4a030" stroke="#c8500a" stroke-width="0.9"/><path d="M19.6 2.5V18.5" stroke="#ffd070" stroke-width="1.1"/></svg>
<div class="box" style="left:1px;top:126px;width:138px;height:29px;overflow:hidden"><div class="btn" style="left:109px;top:0;width:29px;height:27px"></div></div>
<div class="t" style="left:9px;top:135.5px;font-size:13px;color:#1e1e1e">F1</div>
<svg class="ab" style="left:120px;top:139px" width="10" height="5" viewBox="0 0 10 5"><path d="M0 0H10L5.0 5Z" fill="#111"/></svg>
<svg class="ab" style="left:152px;top:132px" width="20" height="19" viewBox="0 0 20 19"><g transform="scale(1.0)"><path d="M1.5 16.5Q4 16.5 5 13L7 7Q8 4 11 4.2M3.5 9.5H10M9.5 9.5L15.5 16.5M15.8 9.5L9 16.5" fill="none" stroke="#5a1a6a" stroke-width="2.8" stroke-linecap="round"/><path d="M1.5 16.5Q4 16.5 5 13L7 7Q8 4 11 4.2M3.5 9.5H10M9.5 9.5L15.5 16.5M15.8 9.5L9 16.5" fill="none" stroke="#c898d0" stroke-width="0.9" stroke-linecap="round"/><circle cx="2.5" cy="5.8" r="1.6" fill="#f4d428" stroke="#d8b010" stroke-width="0.5"/><circle cx="5.5" cy="2.6" r="1.8" fill="#f4d428" stroke="#d8b010" stroke-width="0.5"/><circle cx="9.5" cy="2.1" r="1.8" fill="#f4d428" stroke="#d8b010" stroke-width="0.5"/><circle cx="14.2" cy="2.8" r="2.1" fill="#f4d428" stroke="#d8b010" stroke-width="0.5"/></g></svg>
<div class="ab" style="left:172px;top:130px;width:1px;height:24px;background:#c8c8c8"></div>
<svg class="ab" style="left:178px;top:133px" width="13" height="16" viewBox="0 0 13 16"><path d="M1 1H12V4H11L10 3H5L9 8L4.5 13H10.5L11.5 12H12.5V16H1V15L6.5 8.2L1 2Z" fill="#3a3a3a"/></svg>
<svg class="ab" style="left:199px;top:140px" width="7" height="4" viewBox="0 0 7 4"><path d="M0 0H7L3.5 4Z" fill="#111"/></svg>
<svg class="ab" style="left:215px;top:137px" width="13" height="9" viewBox="0 0 13 9"><rect x="0.5" y="0.5" width="12" height="2.6" fill="#5a8ad0" stroke="#1a4a9a" stroke-width="1"/><rect x="0.5" y="5.4" width="12" height="2.6" fill="#5a8ad0" stroke="#1a4a9a" stroke-width="1"/></svg>
<div class="ab" style="left:241px;top:131px;width:965px;height:21px;background:#f8f8f8;border:1px solid #a9a9a9;border-radius:2px"></div>
<div class="t" style="left:248px;top:136px;font-size:12.3px;color:#1e1e1e">DATE</div>
<svg class="ab" style="left:1210px;top:138px" width="11" height="6" viewBox="0 0 11 6"><path d="M0 0H11L5.5 6Z" fill="#111"/></svg>
<div class="ab" style="left:0;top:155px;width:1223px;height:2px;background:#8c8c8c"></div>
<div class="ab" style="left:33px;top:174px;width:1190px;height:732px;background:#fff"></div>
<div class="ab" style="left:190px;top:174px;width:148px;height:732px;background:#f1d9e6"></div>
<div class="ab" style="left:658px;top:174px;width:59px;height:732px;background:#f1d9e6"></div>
<div class="ab" style="left:33px;top:214px;width:1190px;height:1px;background:#c0c0c0"></div>
<div class="ab" style="left:190px;top:214px;width:148px;height:1px;background:#bda3b1"></div>
<div class="ab" style="left:658px;top:214px;width:59px;height:1px;background:#bda3b1"></div>
<div class="ab" style="left:33px;top:255px;width:1190px;height:1px;background:#c0c0c0"></div>
<div class="ab" style="left:190px;top:255px;width:148px;height:1px;background:#bda3b1"></div>
<div class="ab" style="left:658px;top:255px;width:59px;height:1px;background:#bda3b1"></div>
<div class="ab" style="left:33px;top:296px;width:1190px;height:1px;background:#c0c0c0"></div>
<div class="ab" style="left:190px;top:296px;width:148px;height:1px;background:#bda3b1"></div>
<div class="ab" style="left:658px;top:296px;width:59px;height:1px;background:#bda3b1"></div>
<div class="ab" style="left:33px;top:337px;width:1190px;height:1px;background:#c0c0c0"></div>
<div class="ab" style="left:190px;top:337px;width:148px;height:1px;background:#bda3b1"></div>
<div class="ab" style="left:658px;top:337px;width:59px;height:1px;background:#bda3b1"></div>
<div class="ab" style="left:33px;top:378px;width:1190px;height:1px;background:#c0c0c0"></div>
<div class="ab" style="left:190px;top:378px;width:148px;height:1px;background:#bda3b1"></div>
<div class="ab" style="left:658px;top:378px;width:59px;height:1px;background:#bda3b1"></div>
<div class="ab" style="left:33px;top:419px;width:1190px;height:1px;background:#c0c0c0"></div>
<div class="ab" style="left:190px;top:419px;width:148px;height:1px;background:#bda3b1"></div>
<div class="ab" style="left:658px;top:419px;width:59px;height:1px;background:#bda3b1"></div>
<div class="ab" style="left:33px;top:460px;width:1190px;height:1px;background:#c0c0c0"></div>
<div class="ab" style="left:190px;top:460px;width:148px;height:1px;background:#bda3b1"></div>
<div class="ab" style="left:658px;top:460px;width:59px;height:1px;background:#bda3b1"></div>
<div class="ab" style="left:33px;top:501px;width:1190px;height:1px;background:#c0c0c0"></div>
<div class="ab" style="left:190px;top:501px;width:148px;height:1px;background:#bda3b1"></div>
<div class="ab" style="left:658px;top:501px;width:59px;height:1px;background:#bda3b1"></div>
<div class="ab" style="left:33px;top:542px;width:1190px;height:1px;background:#c0c0c0"></div>
<div class="ab" style="left:190px;top:542px;width:148px;height:1px;background:#bda3b1"></div>
<div class="ab" style="left:658px;top:542px;width:59px;height:1px;background:#bda3b1"></div>
<div class="ab" style="left:33px;top:583px;width:1190px;height:1px;background:#c0c0c0"></div>
<div class="ab" style="left:190px;top:583px;width:148px;height:1px;background:#bda3b1"></div>
<div class="ab" style="left:658px;top:583px;width:59px;height:1px;background:#bda3b1"></div>
<div class="ab" style="left:33px;top:624px;width:1190px;height:1px;background:#c0c0c0"></div>
<div class="ab" style="left:190px;top:624px;width:148px;height:1px;background:#bda3b1"></div>
<div class="ab" style="left:658px;top:624px;width:59px;height:1px;background:#bda3b1"></div>
<div class="ab" style="left:33px;top:665px;width:1190px;height:1px;background:#c0c0c0"></div>
<div class="ab" style="left:190px;top:665px;width:148px;height:1px;background:#bda3b1"></div>
<div class="ab" style="left:658px;top:665px;width:59px;height:1px;background:#bda3b1"></div>
<div class="ab" style="left:33px;top:706px;width:1190px;height:1px;background:#c0c0c0"></div>
<div class="ab" style="left:190px;top:706px;width:148px;height:1px;background:#bda3b1"></div>
<div class="ab" style="left:658px;top:706px;width:59px;height:1px;background:#bda3b1"></div>
<div class="ab" style="left:33px;top:747px;width:1190px;height:1px;background:#c0c0c0"></div>
<div class="ab" style="left:190px;top:747px;width:148px;height:1px;background:#bda3b1"></div>
<div class="ab" style="left:658px;top:747px;width:59px;height:1px;background:#bda3b1"></div>
<div class="ab" style="left:33px;top:788px;width:1190px;height:1px;background:#c0c0c0"></div>
<div class="ab" style="left:190px;top:788px;width:148px;height:1px;background:#bda3b1"></div>
<div class="ab" style="left:658px;top:788px;width:59px;height:1px;background:#bda3b1"></div>
<div class="ab" style="left:33px;top:829px;width:1190px;height:1px;background:#c0c0c0"></div>
<div class="ab" style="left:190px;top:829px;width:148px;height:1px;background:#bda3b1"></div>
<div class="ab" style="left:658px;top:829px;width:59px;height:1px;background:#bda3b1"></div>
<div class="ab" style="left:33px;top:870px;width:1190px;height:1px;background:#c0c0c0"></div>
<div class="ab" style="left:190px;top:870px;width:148px;height:1px;background:#bda3b1"></div>
<div class="ab" style="left:658px;top:870px;width:59px;height:1px;background:#bda3b1"></div>
<div class="ab" style="left:111px;top:174px;width:1px;height:732px;background:#c0c0c0"></div>
<div class="ab" style="left:190px;top:174px;width:1px;height:732px;background:#c0c0c0"></div>
<div class="ab" style="left:338px;top:174px;width:1px;height:732px;background:#c0c0c0"></div>
<div class="ab" style="left:429px;top:174px;width:1px;height:732px;background:#c0c0c0"></div>
<div class="ab" style="left:658px;top:174px;width:1px;height:732px;background:#c0c0c0"></div>
<div class="ab" style="left:717px;top:174px;width:1px;height:732px;background:#c0c0c0"></div>
<div class="ab" style="left:853px;top:174px;width:1px;height:732px;background:#c0c0c0"></div>
<div class="ab" style="left:910px;top:174px;width:1px;height:732px;background:#c0c0c0"></div>
<div class="ab" style="left:191px;top:174px;width:1px;height:732px;background:#f8eaf2"></div>
<div class="ab" style="left:659px;top:174px;width:1px;height:732px;background:#f8eaf2"></div>
<div class="ab" style="left:190px;top:174px;width:1px;height:732px;background:#c04f8c"></div>
<div class="ab" style="left:658px;top:174px;width:1px;height:732px;background:#c04f8c"></div>
<div class="ab" style="left:717px;top:174px;width:1px;height:732px;background:#c04f8c"></div>
<div class="ab" style="left:338px;top:174px;width:1px;height:732px;background:#c04f8c"></div>
<div class="ab" style="left:1001px;top:174px;width:1px;height:732px;background:repeating-linear-gradient(#333 0 5px,#fff 5px 10px)"></div>
<div class="ab" style="left:0;top:157px;width:1223px;height:16px;background:#d4d4d4"></div>
<div class="ab" style="left:0;top:173px;width:1223px;height:1px;background:#111"></div>
<div class="ab" style="left:0;top:172px;width:1223px;height:1px;background:#f4f4f4"></div>
<div class="t" style="left:33px;width:78px;text-align:center;top:160px;font-size:12.3px;color:#111">A</div>
<div class="ab" style="left:110px;top:157px;width:3px;height:16px;background:#f4f4f4"></div>
<div class="ab" style="left:111px;top:157px;width:1px;height:17px;background:#111"></div>
<div class="t" style="left:112px;width:78px;text-align:center;top:160px;font-size:12.3px;color:#111">B</div>
<div class="ab" style="left:189px;top:157px;width:3px;height:16px;background:#f4f4f4"></div>
<div class="ab" style="left:190px;top:157px;width:1px;height:17px;background:#111"></div>
<div class="t" style="left:191px;width:147px;text-align:center;top:160px;font-size:12.3px;color:#111">C</div>
<div class="ab" style="left:337px;top:157px;width:3px;height:16px;background:#f4f4f4"></div>
<div class="ab" style="left:338px;top:157px;width:1px;height:17px;background:#111"></div>
<div class="t" style="left:339px;width:90px;text-align:center;top:160px;font-size:12.3px;color:#111">D</div>
<div class="ab" style="left:428px;top:157px;width:3px;height:16px;background:#f4f4f4"></div>
<div class="ab" style="left:429px;top:157px;width:1px;height:17px;background:#111"></div>
<div class="t" style="left:430px;width:228px;text-align:center;top:160px;font-size:12.3px;color:#111">E</div>
<div class="ab" style="left:657px;top:157px;width:3px;height:16px;background:#f4f4f4"></div>
<div class="ab" style="left:658px;top:157px;width:1px;height:17px;background:#111"></div>
<div class="t" style="left:659px;width:58px;text-align:center;top:160px;font-size:12.3px;color:#111">F</div>
<div class="ab" style="left:716px;top:157px;width:3px;height:16px;background:#f4f4f4"></div>
<div class="ab" style="left:717px;top:157px;width:1px;height:17px;background:#111"></div>
<div class="t" style="left:718px;width:135px;text-align:center;top:160px;font-size:12.3px;color:#111">G</div>
<div class="ab" style="left:852px;top:157px;width:3px;height:16px;background:#f4f4f4"></div>
<div class="ab" style="left:853px;top:157px;width:1px;height:17px;background:#111"></div>
<div class="t" style="left:854px;width:56px;text-align:center;top:160px;font-size:12.3px;color:#111">H</div>
<div class="ab" style="left:909px;top:157px;width:3px;height:16px;background:#f4f4f4"></div>
<div class="ab" style="left:910px;top:157px;width:1px;height:17px;background:#111"></div>
<div class="t" style="left:911px;width:90px;text-align:center;top:160px;font-size:12.3px;color:#111">I</div>
<div class="ab" style="left:1000px;top:157px;width:3px;height:16px;background:#f4f4f4"></div>
<div class="ab" style="left:1001px;top:157px;width:1px;height:17px;background:#111"></div>
<div class="t" style="left:1113px;width:200px;text-align:center;top:160px;font-size:12.3px;color:#111">J</div>
<div class="ab" style="left:32px;top:157px;width:1px;height:17px;background:#111"></div>
<div class="ab" style="left:0;top:174px;width:32px;height:732px;background:#d4d4d4"></div>
<div class="ab" style="left:31px;top:174px;width:1px;height:732px;background:#f4f4f4"></div>
<div class="ab" style="left:32px;top:174px;width:1px;height:732px;background:#111"></div>
<div class="t" style="left:1px;width:32px;text-align:center;top:189px;font-size:12.3px;color:#111">1</div>
<div class="ab" style="left:0;top:213px;width:32px;height:3px;background:#f4f4f4"></div>
<div class="ab" style="left:0;top:214px;width:32px;height:1px;background:#111"></div>
<div class="t" style="left:1px;width:32px;text-align:center;top:230px;font-size:12.3px;color:#111">2</div>
<div class="ab" style="left:0;top:254px;width:32px;height:3px;background:#f4f4f4"></div>
<div class="ab" style="left:0;top:255px;width:32px;height:1px;background:#111"></div>
<div class="t" style="left:1px;width:32px;text-align:center;top:271px;font-size:12.3px;color:#111">3</div>
<div class="ab" style="left:0;top:295px;width:32px;height:3px;background:#f4f4f4"></div>
<div class="ab" style="left:0;top:296px;width:32px;height:1px;background:#111"></div>
<div class="t" style="left:1px;width:32px;text-align:center;top:312px;font-size:12.3px;color:#111">4</div>
<div class="ab" style="left:0;top:336px;width:32px;height:3px;background:#f4f4f4"></div>
<div class="ab" style="left:0;top:337px;width:32px;height:1px;background:#111"></div>
<div class="t" style="left:1px;width:32px;text-align:center;top:353px;font-size:12.3px;color:#111">5</div>
<div class="ab" style="left:0;top:377px;width:32px;height:3px;background:#f4f4f4"></div>
<div class="ab" style="left:0;top:378px;width:32px;height:1px;background:#111"></div>
<div class="t" style="left:1px;width:32px;text-align:center;top:394px;font-size:12.3px;color:#111">6</div>
<div class="ab" style="left:0;top:418px;width:32px;height:3px;background:#f4f4f4"></div>
<div class="ab" style="left:0;top:419px;width:32px;height:1px;background:#111"></div>
<div class="t" style="left:1px;width:32px;text-align:center;top:435px;font-size:12.3px;color:#111">7</div>
<div class="ab" style="left:0;top:459px;width:32px;height:3px;background:#f4f4f4"></div>
<div class="ab" style="left:0;top:460px;width:32px;height:1px;background:#111"></div>
<div class="t" style="left:1px;width:32px;text-align:center;top:476px;font-size:12.3px;color:#111">8</div>
<div class="ab" style="left:0;top:500px;width:32px;height:3px;background:#f4f4f4"></div>
<div class="ab" style="left:0;top:501px;width:32px;height:1px;background:#111"></div>
<div class="t" style="left:1px;width:32px;text-align:center;top:517px;font-size:12.3px;color:#111">9</div>
<div class="ab" style="left:0;top:541px;width:32px;height:3px;background:#f4f4f4"></div>
<div class="ab" style="left:0;top:542px;width:32px;height:1px;background:#111"></div>
<div class="t" style="left:1px;width:32px;text-align:center;top:558px;font-size:12.3px;color:#111">10</div>
<div class="ab" style="left:0;top:582px;width:32px;height:3px;background:#f4f4f4"></div>
<div class="ab" style="left:0;top:583px;width:32px;height:1px;background:#111"></div>
<div class="t" style="left:1px;width:32px;text-align:center;top:599px;font-size:12.3px;color:#111">11</div>
<div class="ab" style="left:0;top:623px;width:32px;height:3px;background:#f4f4f4"></div>
<div class="ab" style="left:0;top:624px;width:32px;height:1px;background:#111"></div>
<div class="t" style="left:1px;width:32px;text-align:center;top:640px;font-size:12.3px;color:#111">12</div>
<div class="ab" style="left:0;top:664px;width:32px;height:3px;background:#f4f4f4"></div>
<div class="ab" style="left:0;top:665px;width:32px;height:1px;background:#111"></div>
<div class="t" style="left:1px;width:32px;text-align:center;top:681px;font-size:12.3px;color:#111">13</div>
<div class="ab" style="left:0;top:705px;width:32px;height:3px;background:#f4f4f4"></div>
<div class="ab" style="left:0;top:706px;width:32px;height:1px;background:#111"></div>
<div class="t" style="left:1px;width:32px;text-align:center;top:722px;font-size:12.3px;color:#111">14</div>
<div class="ab" style="left:0;top:746px;width:32px;height:3px;background:#f4f4f4"></div>
<div class="ab" style="left:0;top:747px;width:32px;height:1px;background:#111"></div>
<div class="t" style="left:1px;width:32px;text-align:center;top:763px;font-size:12.3px;color:#111">15</div>
<div class="ab" style="left:0;top:787px;width:32px;height:3px;background:#f4f4f4"></div>
<div class="ab" style="left:0;top:788px;width:32px;height:1px;background:#111"></div>
<div class="t" style="left:1px;width:32px;text-align:center;top:804px;font-size:12.3px;color:#111">16</div>
<div class="ab" style="left:0;top:828px;width:32px;height:3px;background:#f4f4f4"></div>
<div class="ab" style="left:0;top:829px;width:32px;height:1px;background:#111"></div>
<div class="t" style="left:1px;width:32px;text-align:center;top:845px;font-size:12.3px;color:#111">17</div>
<div class="ab" style="left:0;top:869px;width:32px;height:3px;background:#f4f4f4"></div>
<div class="ab" style="left:0;top:870px;width:32px;height:1px;background:#111"></div>
<div class="t" style="left:1px;width:32px;text-align:center;top:886px;font-size:12.3px;color:#111">18</div>
<div class="cell" style="left:33px;width:78px;text-align:center;top:188px;font-weight:bold;font-size:12.6px">NAME_1</div>
<div class="cell" style="left:112px;width:78px;text-align:center;top:188px;font-weight:bold;font-size:12.6px">SURNAME</div>
<div class="cell" style="left:659px;width:58px;text-align:center;top:188px;font-weight:bold;font-size:12.6px">DATE</div>
<div class="cell" style="left:718px;width:135px;text-align:center;top:188px;font-weight:bold;font-size:12.6px">WEBSITE</div>
<div class="cell" style="left:854px;width:56px;text-align:center;top:188px;font-weight:bold;font-size:12.6px">REPLY?</div>
<div class="cell" style="left:911px;width:90px;text-align:center;top:188px;font-weight:bold;font-size:12.6px">ANSWER</div>
<div class="cell" style="left:33px;width:78px;text-align:center;top:229px;font-weight:normal;font-size:12.6px">stuff</div>
<div class="cell" style="left:112px;width:78px;text-align:center;top:229px;font-weight:normal;font-size:12.6px">stuff</div>
<div class="cell" style="left:431px;width:227px;text-align:center;top:229px;font-weight:normal;font-size:12.6px">stuff</div>
<div class="cell" style="left:718px;width:135px;text-align:center;top:229px;font-weight:normal;font-size:12.6px">stuff</div>
<div class="cell" style="left:854px;width:56px;text-align:center;top:229px;font-weight:normal;font-size:12.6px">stuff</div>
<div class="cell" style="left:911px;width:90px;text-align:center;top:229px;font-weight:normal;font-size:12.6px">stuff</div>
<div class="cell" style="left:33px;width:78px;text-align:center;top:270px;font-weight:normal;font-size:12.6px">stuff</div>
<div class="cell" style="left:112px;width:78px;text-align:center;top:270px;font-weight:normal;font-size:12.6px">stuff</div>
<div class="cell" style="left:431px;width:227px;text-align:center;top:270px;font-weight:normal;font-size:12.6px">stuff</div>
<div class="cell" style="left:718px;width:135px;text-align:center;top:270px;font-weight:normal;font-size:12.6px">stuff</div>
<div class="cell" style="left:854px;width:56px;text-align:center;top:270px;font-weight:normal;font-size:12.6px">stuff</div>
<div class="cell" style="left:911px;width:90px;text-align:center;top:270px;font-weight:normal;font-size:12.6px">stuff</div>
<div class="cell" style="left:33px;width:78px;text-align:center;top:311px;font-weight:normal;font-size:12.6px">stuff</div>
<div class="cell" style="left:112px;width:78px;text-align:center;top:311px;font-weight:normal;font-size:12.6px">stuff</div>
<div class="cell" style="left:431px;width:227px;text-align:center;top:311px;font-weight:normal;font-size:12.6px">stuff</div>
<div class="cell" style="left:718px;width:135px;text-align:center;top:311px;font-weight:normal;font-size:12.6px">stuff</div>
<div class="cell" style="left:854px;width:56px;text-align:center;top:311px;font-weight:normal;font-size:12.6px">stuff</div>
<div class="cell" style="left:911px;width:90px;text-align:center;top:311px;font-weight:normal;font-size:12.6px">stuff</div>
<div class="cell" style="left:659px;width:58px;text-align:center;top:229px;font-weight:normal;font-size:12.6px">02/02/23</div>
<div class="cell" style="left:659px;width:58px;text-align:center;top:270px;font-weight:normal;font-size:12.6px">01/01/23</div>
<div class="cell" style="left:659px;width:58px;text-align:center;top:311px;font-weight:normal;font-size:12.6px">03/103/23</div>
<div class="cell" style="left:192px;top:187px;font-weight:bold;font-size:15px;letter-spacing:0.3px">COMPANY</div>
<div class="cell" style="left:192px;top:228px;font-weight:bold;font-size:15px;letter-spacing:0.3px">XYZ ltd</div>
<div class="cell" style="left:192px;top:269px;font-weight:bold;font-size:15px;letter-spacing:0.3px">ABC Ltd</div>
<div class="cell" style="left:192px;top:310px;font-weight:bold;font-size:15px;letter-spacing:0.3px">123 Ltd</div>
<div class="ab" style="left:1002px;top:174px;width:221px;height:200px;overflow:hidden">
<div class="cell" style="left:111px;width:200px;text-align:center;top:14px;font-weight:bold">NOTES</div>
<div class="cell" style="left:111px;width:200px;text-align:center;top:55px;font-weight:normal">stuff</div>
<div class="cell" style="left:111px;width:200px;text-align:center;top:96px;font-weight:normal">stuff</div>
<div class="cell" style="left:111px;width:200px;text-align:center;top:137px;font-weight:normal">stuff</div>
</div>
<div class="ab" style="left:658px;top:173px;width:60px;height:41px;border:2px solid #000"></div>
<div class="ab" style="left:0;top:906px;width:1223px;height:10px;background:#e6e6e6"></div>
<div class="ab" style="left:3px;top:906px;width:540px;height:10px;background:linear-gradient(#ececec,#d4d4d4);border-bottom:1px solid #c4c4c4;border-radius:4px"></div>
<svg class="ab" style="left:3px;top:906px" width="5" height="11" viewBox="0 0 5 11"><path d="M4.5 0.5Q1 2 1 5.5Q1 9 4.5 10.5" fill="none" stroke="#666" stroke-width="0.9"/></svg>
<svg class="ab" style="left:539px;top:906px" width="5" height="11" viewBox="0 0 5 11"><path d="M0.5 0.5Q4 2 4 5.5Q4 9 0.5 10.5" fill="none" stroke="#666" stroke-width="0.9"/></svg>
<div class="ab" style="left:1218px;top:906px;width:5px;height:10px;background:#888;border:1px solid #666"></div>
<div class="ab" style="left:1223px;top:157px;width:10px;height:749px;background:#e2e2e2"></div>
<div class="ab" style="left:1223px;top:162px;width:1px;height:744px;background:#a8a8a8"></div>
<div class="ab" style="left:1223px;top:163px;width:10px;height:349px;background:linear-gradient(90deg,#f0f0f0,#d0d0d0);border:1px solid #a8a8a8;border-radius:5px"></div>
<div class="ab" style="left:1223px;top:155px;width:10px;height:7px;background:#b4b4b4"></div><div class="ab" style="left:1225px;top:158px;width:6px;height:2px;background:#222"></div>
<div class="ab" style="left:1233px;top:126px;width:47px;height:812px;background:#d6d6d6"></div>
<div class="ab" style="left:1233px;top:126px;width:1px;height:811px;background:#777"></div>
<div class="ab" style="left:1234px;top:126px;width:1px;height:811px;background:#fff"></div>
<div class="ab" style="left:1239px;top:126px;width:1px;height:811px;background:#777"></div>
<div class="ab" style="left:1240px;top:126px;width:1px;height:811px;background:#fff"></div>
<div class="ab" style="left:1233px;top:937px;width:47px;height:1px;background:#777"></div><div class="ab" style="left:1233px;top:938px;width:47px;height:1px;background:#fff"></div><div class="ab" style="left:1233px;top:126px;width:47px;height:1px;background:#888"></div><div class="ab" style="left:1240px;top:127px;width:40px;height:1px;background:#fff"></div><div class="ab" style="left:1234px;top:127px;width:5px;height:1px;background:#fff"></div>
<div class="ab" style="left:1233px;top:496px;width:7px;height:73px;background:#222"></div>
<svg class="ab" style="left:1234px;top:527px" width="6" height="9"><path d="M0 0L5 4.5L0 9Z" fill="#ddd"/></svg>
<svg class="ab" style="left:1257px;top:138px" width="6" height="16" viewBox="0 0 6 16"><circle cx="3" cy="3" r="1.2" fill="#555"/><circle cx="3" cy="8" r="1.2" fill="#555"/><circle cx="3" cy="13" r="1.2" fill="#555"/></svg>
<div class="ab" style="left:1249px;top:165px;width:22px;height:1px;background:#bdbdbd"></div>
<svg class="ab" style="left:1248px;top:173px" width="24" height="24" viewBox="0 0 24 24"><path d="M6 6L18 18" stroke="#6e6e6e" stroke-width="5" stroke-linecap="round"/><circle cx="5" cy="5" r="4.6" fill="#6e6e6e"/><circle cx="19" cy="19" r="4.6" fill="#6e6e6e"/><path d="M6 6L18 18" stroke="#f6f6f6" stroke-width="3" stroke-linecap="round"/><circle cx="5" cy="5" r="3.6" fill="#f6f6f6"/><circle cx="19" cy="19" r="3.6" fill="#f6f6f6"/><path d="M0 2.5L2.5 0L6 3.5L3.5 6Z" fill="#d6d6d6" stroke="#6e6e6e" stroke-width="0.9"/><path d="M24 21.5L21.5 24L18 20.5L20.5 18Z" fill="#d6d6d6" stroke="#6e6e6e" stroke-width="0.9"/><rect x="0" y="0" width="2.6" height="2.6" fill="#d6d6d6" transform="rotate(45 1.3 1.3)"/></svg>
<div class="ab" style="left:1244px;top:204px;width:32px;height:32px;background:#d2d2d2;border:1px solid #bcbcbc;border-radius:4px"></div>
<svg class="ab" style="left:1247px;top:209px" width="25" height="26" viewBox="0 0 25 26"><defs><linearGradient id="tg" x1="0" y1="0" x2="1" y2="0"><stop offset="0" stop-color="#222"/><stop offset="0.5" stop-color="#666"/><stop offset="1" stop-color="#222"/></linearGradient></defs><path d="M4 1.5H22V7H20.5Q20 5 18 5H15.5V24.5H10.5V5H8Q6 5 5.5 7H4Z" fill="url(#tg)" stroke="#1a1a1a" stroke-width="0.8"/><path d="M1.5 7.5V24.5H22.5Z" fill="#62b84e" stroke="#2a8a1a" stroke-width="1"/><path d="M4.5 14.5V21.5H12Z" fill="#d6d6d6" stroke="#2a8a1a" stroke-width="1"/><path d="M3 23.5H20" stroke="#e8a040" stroke-width="0.8" stroke-dasharray="1 2"/></svg>
<svg class="ab" style="left:1248px;top:242px" width="24" height="23" viewBox="0 0 24 23"><defs><linearGradient id="gal" x1="0" y1="0" x2="0" y2="1"><stop offset="0" stop-color="#8aaee0"/><stop offset="0.45" stop-color="#e8a850"/><stop offset="1" stop-color="#f4c040"/></linearGradient></defs><path d="M8 6L12 1.5L16 6" fill="none" stroke="#555" stroke-width="1"/><rect x="1.5" y="6.5" width="21" height="15" rx="1.5" fill="#f0b060" stroke="#9a5010" stroke-width="1.2"/><rect x="3.5" y="8.5" width="17" height="11" fill="url(#gal)"/><circle cx="8" cy="18" r="3" fill="#fff2a0"/><path d="M13 19.5V14L10 11M13 14.5L16 11.5M13 13L12.5 10" stroke="#222" stroke-width="1"/></svg>
<svg class="ab" style="left:1249px;top:280px" width="22" height="22" viewBox="0 0 22 22"><circle cx="11" cy="11" r="10" fill="#f4f4f4" stroke="#777" stroke-width="1.6"/><circle cx="11" cy="11" r="7.5" fill="#fff" stroke="#ccc"/><path d="M6 6L12.5 9.5L11 11Z" fill="#d02020"/><path d="M16 16L9.5 12.5L11 11Z" fill="#3060c0"/></svg>
<svg class="ab" style="left:1249px;top:314px" width="22" height="21" viewBox="0 0 22 21"><g transform="scale(1.15)"><path d="M1.5 16.5Q4 16.5 5 13L7 7Q8 4 11 4.2M3.5 9.5H10M9.5 9.5L15.5 16.5M15.8 9.5L9 16.5" fill="none" stroke="#5a1a6a" stroke-width="2.8" stroke-linecap="round"/><path d="M1.5 16.5Q4 16.5 5 13L7 7Q8 4 11 4.2M3.5 9.5H10M9.5 9.5L15.5 16.5M15.8 9.5L9 16.5" fill="none" stroke="#c898d0" stroke-width="0.9" stroke-linecap="round"/><circle cx="2.5" cy="5.8" r="1.6" fill="#f4d428" stroke="#d8b010" stroke-width="0.5"/><circle cx="5.5" cy="2.6" r="1.8" fill="#f4d428" stroke="#d8b010" stroke-width="0.5"/><circle cx="9.5" cy="2.1" r="1.8" fill="#f4d428" stroke="#d8b010" stroke-width="0.5"/><circle cx="14.2" cy="2.8" r="2.1" fill="#f4d428" stroke="#d8b010" stroke-width="0.5"/></g></svg>
<svg class="ab" style="left:0px;top:916px" width="125" height="22" viewBox="0 0 125 22"><rect x="13" y="3.5" width="1.3" height="14.5" fill="#111"/><path d="M23 4V18L15 11Z" fill="#111"/><path d="M44.5 4V18L36.5 11Z" fill="#111"/><path d="M58.5 4V18L66.5 11Z" fill="#111"/><path d="M80.5 4V18L88.5 11Z" fill="#111"/><rect x="89" y="3.5" width="1.3" height="14.5" fill="#111"/><path d="M107.5 10.5H123M115.3 3V18.5" stroke="#111" stroke-width="3"/></svg>
<div class="ab" style="left:133px;top:916px;width:65px;height:20px;background:#f6f6f6"></div>
<div class="ab" style="left:133px;top:936px;width:65px;height:3px;background:#111"></div>
<div class="t" style="left:145px;top:921px;font-size:12.5px;color:#111">Sheet1</div>
<div class="ab" style="left:0;top:939px;width:1280px;height:1px;background:#c8c8c8"></div>
<svg class="ab" style="left:3px;top:946px" width="3" height="24" viewBox="0 0 3 24"><rect x="0" y="0" width="3" height="3" fill="#9a9a9a"/><rect x="0" y="4" width="3" height="3" fill="#9a9a9a"/><rect x="0" y="8" width="3" height="3" fill="#9a9a9a"/><rect x="0" y="12" width="3" height="3" fill="#9a9a9a"/><rect x="0" y="16" width="3" height="3" fill="#9a9a9a"/><rect x="0" y="20" width="3" height="3" fill="#9a9a9a"/></svg>
<svg class="ab" style="left:21px;top:950px" width="17" height="16" viewBox="0 0 17 16"><path d="M2.5 2.5L14.5 13.5M14.5 2.5L2.5 13.5" stroke="#555" stroke-width="4.2" stroke-linecap="round"/><path d="M2.5 2.5L14.5 13.5M14.5 2.5L2.5 13.5" stroke="#b8b8b8" stroke-width="2.2" stroke-linecap="round"/></svg>
<div class="box" style="left:45px;top:943px;width:250px;height:30px;overflow:hidden"><div class="btn" style="left:220px;top:0;width:29px;height:28px"></div></div>
<div class="t" style="left:54px;top:952px;font-size:13.5px;color:#7a7a7a">Find</div>
<svg class="ab" style="left:275px;top:956px" width="10" height="5" viewBox="0 0 10 5"><path d="M0 0H10L5.0 5Z" fill="#111"/></svg>
<svg class="ab" style="left:302px;top:948px" width="19" height="20" viewBox="0 0 19 20"><path d="M2 9L9.5 2L17 9" fill="none" stroke="#c4c4c4" stroke-width="3"/><circle cx="9.5" cy="12" r="1.6" fill="#c4c4c4"/><circle cx="9.5" cy="17" r="1.6" fill="#c4c4c4"/></svg>
<svg class="ab" style="left:335px;top:948px" width="19" height="20" viewBox="0 0 19 20"><path d="M2 11L9.5 18L17 11" fill="none" stroke="#c4c4c4" stroke-width="3"/><circle cx="9.5" cy="8" r="1.6" fill="#c4c4c4"/><circle cx="9.5" cy="3" r="1.6" fill="#c4c4c4"/></svg>
<div class="t" style="left:364px;top:952px;font-size:12.9px;color:#8a8a8a">Find All</div>
<div class="ab" style="left:414px;top:951px;width:14px;height:14px;background:#f6f6f6;border:1px solid #8a8a8a;border-radius:2px"></div>
<div class="t" style="left:436px;top:952px;font-size:13.55px;color:#1e1e1e">Formatted Display</div>
<div class="ab" style="left:550px;top:951px;width:14px;height:14px;background:#f6f6f6;border:1px solid #8a8a8a;border-radius:2px"></div>
<div class="t" style="left:572px;top:953px;font-size:12.7px;color:#1e1e1e">Match Case</div>
<svg class="ab" style="left:656px;top:946px" width="24" height="24" viewBox="0 0 24 24"><circle cx="9" cy="9.4" r="7.3" fill="#e4e4e4" stroke="#2a52a8" stroke-width="2.5"/><circle cx="9" cy="9.4" r="6" fill="none" stroke="#6a8ad0" stroke-width="0.7"/><ellipse cx="7.5" cy="6.5" rx="2" ry="1.3" fill="#fff"/><path d="M14 15.5L19.5 21" stroke="#1e1e1e" stroke-width="3.6" stroke-linecap="round"/><path d="M5 20.5L19 6.5" stroke="#c8600a" stroke-width="4"/><path d="M5 20.5L19 6.5" stroke="#f4a030" stroke-width="2.2" stroke-dasharray="0.8 0.6"/><path d="M18.5 7L20.5 5" stroke="#8a8a8a" stroke-width="4"/><circle cx="21.2" cy="4.2" r="1.9" fill="#e01818"/><path d="M5.5 20L3.5 22" stroke="#f8e0b0" stroke-width="3"/><path d="M3.8 21.7L2.8 22.7" stroke="#111" stroke-width="1.8"/></svg>
<div class="ab" style="left:0;top:978px;width:1280px;height:1px;background:#b4b4b4"></div>
<div class="ab" style="left:0;top:979px;width:1280px;height:21px;background:#d6d6d6"></div>
<div class="t" style="left:9px;top:984px;font-size:12.5px;color:#1e1e1e">Sheet 1 of 1</div>
<div class="t" style="left:396px;top:984px;font-size:13.3px;color:#1e1e1e">Default</div>
<div class="t" style="left:531px;top:984px;font-size:12.3px;color:#1e1e1e">English (UK)</div>
<svg class="ab" style="left:706px;top:984px" width="13" height="11" viewBox="0 0 13 11"><rect x="1" y="2" width="9" height="6" fill="#8a8a8a"/><path d="M10 1H12M11 1V10M10 10H12" stroke="#666" stroke-width="0.9"/></svg>
<svg class="ab" style="left:736px;top:982px" width="13" height="13" viewBox="0 0 13 13"><path d="M9 0.5H0.5V11.5H9" fill="none" stroke="#666"/><path d="M10 4V10M7.5 5.5L12.5 8.5M12.5 5.5L7.5 8.5" stroke="#c01a1a" stroke-width="1.3"/></svg>
<div class="t" style="left:860px;top:984px;font-size:12.2px;color:#1e1e1e">Average: 44943; Sum: 89886</div>
<div class="ab" style="left:1099px;top:989px;width:8px;height:2px;background:#888"></div>
<div class="ab" style="left:1113px;top:989px;width:97px;height:2px;background:#111"></div>
<div class="ab" style="left:1157px;top:985px;width:9px;height:9px;background:#fff;border:1px solid #888;border-radius:50%"></div>
<div class="ab" style="left:1216px;top:989px;width:8px;height:2px;background:#888"></div><div class="ab" style="left:1219px;top:986px;width:2px;height:8px;background:#888"></div>
<div class="t" style="left:1239px;top:984px;font-size:13.3px;color:#1e1e1e">110%</div>
<div class="ab" style="left:318px;top:47px;width:188px;height:574px;background:#f7f7f7;border:1px solid #a3a3a3;box-shadow:1px 2px 3px rgba(0,0,0,0.18)"></div>
<div class="it dis" style="top:55px">Sort<span style="letter-spacing:-0.6px">...</span></div>
<div class="it dis" style="top:81px">Sort Ascending</div>
<div class="it dis" style="top:107px">Sort Descending</div>
<div class="it dis" style="top:133px">AutoFilter</div>
<div class="it" style="top:159px">More Filters</div>
<div class="arr" style="top:160.5px"></div>
<div class="it" style="top:185px">Define Range<span style="letter-spacing:-0.6px">...</span></div>
<div class="it" style="top:211px">Select Range<span style="letter-spacing:-0.6px">...</span></div>
<div class="it dis" style="top:237px">Refresh Range</div>
<div class="it" style="top:263px">Pivot Table</div>
<div class="arr" style="top:264.5px"></div>
<div class="it" style="top:289px">Calculate</div>
<div class="arr" style="top:290.5px"></div>
<div class="it" style="top:315px">Validity<span style="letter-spacing:-0.6px">...</span></div>
<div class="it dis" style="top:341px">Subtotals<span style="letter-spacing:-0.6px">...</span></div>
<div class="it" style="top:367px">Form<span style="letter-spacing:-0.6px">...</span></div>
<div class="it dis" style="top:393px">Streams<span style="letter-spacing:-0.6px">...</span></div>
<div class="it" style="top:419px">XML Source<span style="letter-spacing:-0.6px">...</span></div>
<div class="it" style="top:445px">Data Provider<span style="letter-spacing:-0.6px">...</span></div>
<div class="it dis" style="top:471px">Refresh Data Provider</div>
<div class="it dis" style="top:497px">Multiple Operations<span style="letter-spacing:-0.6px">...</span></div>
<div class="it dis" style="top:523px">Text to Columns<span style="letter-spacing:-0.6px">...</span></div>
<div class="it" style="top:549px">Consolidate<span style="letter-spacing:-0.6px">...</span></div>
<div class="it" style="top:575px">Group and Outline</div>
<div class="arr" style="top:576.5px"></div>
<div class="it" style="top:601px">Statistics</div>
<div class="arr" style="top:602.5px"></div>
<div class="sep" style="top:126px"></div>
<div class="sep" style="top:178px"></div>
<div class="sep" style="top:256px"></div>
<div class="sep" style="top:282px"></div>
<div class="sep" style="top:386px"></div>
<div class="sep" style="top:490px"></div>
<svg class="ab" style="left:343px;top:29px" width="15" height="21" viewBox="0 0 15 21"><path d="M1.2 1.2V17.5L5.2 13.8L8.2 19.8L10.8 18.6L8 12.6H13.6Z" fill="#fafafa" stroke="#000" stroke-width="1.4" stroke-linejoin="miter"/></svg>
</body></html>
